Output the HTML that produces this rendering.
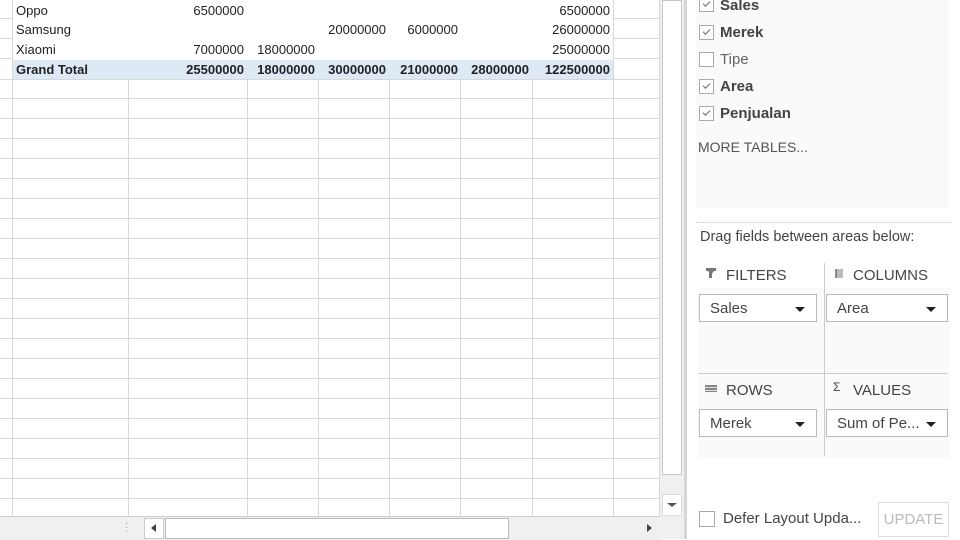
<!DOCTYPE html>
<html><head><style>
body{margin:0;width:960px;height:539px;overflow:hidden;background:#fff;position:relative;font-family:"Liberation Sans",sans-serif;}
.a{position:absolute}
.t{position:absolute;font-size:13px;color:#222;line-height:20px}
.r{text-align:right}
.b{font-weight:bold}
.p{font-size:15px;color:#444;position:absolute}
.cb{position:absolute;width:13px;height:13px;border:1px solid #aaa;background:#fff;left:699px}
.cb.k::after{content:"";position:absolute;left:3px;top:1px;width:6px;height:3px;border-left:1.5px solid #666;border-bottom:1.5px solid #666;transform:rotate(-45deg);top:3px}
.dd{position:absolute;height:28px;border:1px solid #bbb;background:#fff;font-size:15px;color:#444;line-height:28px;padding-left:10px;box-sizing:border-box}
.dd::after{content:"";position:absolute;right:11px;top:12px;border:5px solid transparent;border-top:5px solid #222;border-bottom:0}
</style></head><body>
<svg class="a" style="left:0;top:0" width="660" height="517">
<g stroke="#d8d8d8" stroke-width="1">
<line x1="12.5" y1="0" x2="12.5" y2="517"/>
<line x1="613.5" y1="0" x2="613.5" y2="517"/>
<line x1="659.5" y1="0" x2="659.5" y2="517"/>
<g id="v"><line x1="128.5" y1="80" x2="128.5" y2="517"/><line x1="247.5" y1="80" x2="247.5" y2="517"/><line x1="318.5" y1="80" x2="318.5" y2="517"/><line x1="389.5" y1="80" x2="389.5" y2="517"/><line x1="460.5" y1="80" x2="460.5" y2="517"/><line x1="532.5" y1="80" x2="532.5" y2="517"/></g>
<path d="M0 18.5H12M0 38.5H12M0 58.5H12M613 18.5H660M613 38.5H660M613 58.5H660M0 79.5H660M0 98.5H660M0 118.5H660M0 138.5H660M0 158.5H660M0 178.5H660M0 198.5H660M0 218.5H660M0 238.5H660M0 258.5H660M0 278.5H660M0 298.5H660M0 318.5H660M0 338.5H660M0 358.5H660M0 378.5H660M0 398.5H660M0 418.5H660M0 438.5H660M0 458.5H660M0 478.5H660M0 498.5H660"/>
</g>
<rect x="13" y="60" width="600" height="19" fill="#dde9f5"/>
</svg>
<div class="t" style="left:16px;top:1px">Oppo</div>
<div class="t r" style="left:128px;width:116px;top:1px">6500000</div>
<div class="t r" style="left:532px;width:78px;top:1px">6500000</div>
<div class="t" style="left:16px;top:20px">Samsung</div>
<div class="t r" style="left:318px;width:68px;top:20px">20000000</div>
<div class="t r" style="left:389px;width:69px;top:20px">6000000</div>
<div class="t r" style="left:532px;width:78px;top:20px">26000000</div>
<div class="t" style="left:16px;top:40px">Xiaomi</div>
<div class="t r" style="left:128px;width:116px;top:40px">7000000</div>
<div class="t r" style="left:247px;width:68px;top:40px">18000000</div>
<div class="t r" style="left:532px;width:78px;top:40px">25000000</div>
<div class="t b" style="left:16px;top:60px">Grand Total</div>
<div class="t r b" style="left:128px;width:116px;top:60px">25500000</div>
<div class="t r b" style="left:247px;width:68px;top:60px">18000000</div>
<div class="t r b" style="left:318px;width:68px;top:60px">30000000</div>
<div class="t r b" style="left:389px;width:69px;top:60px">21000000</div>
<div class="t r b" style="left:460px;width:69px;top:60px">28000000</div>
<div class="t r b" style="left:532px;width:78px;top:60px">122500000</div>
<!-- bottom bar -->
<div class="a" style="left:0;top:516px;width:662px;height:23px;background:#f0f0f0;border-top:1px solid #ccc"></div>
<div class="a" style="left:125px;top:522px;color:#999;font-size:10px;line-height:4px">·<br>·<br>·</div>
<div class="a" style="left:144px;top:518px;width:20px;height:21px;background:#fff;border:1px solid #ccc;box-sizing:border-box"></div>
<div class="a" style="left:151px;top:524px;border:4px solid transparent;border-right:5px solid #444;border-left:0"></div>
<div class="a" style="left:165px;top:518px;width:344px;height:21px;background:#fff;border:1px solid #bbb;box-sizing:border-box"></div>
<div class="a" style="left:647px;top:524px;border:4px solid transparent;border-left:5px solid #444;border-right:0"></div>
<!-- vscroll -->
<div class="a" style="left:660px;top:0;width:24px;height:539px;background:#f0f0f0"></div>
<div class="a" style="left:662px;top:0;width:20px;height:475px;background:#fff;border:1px solid #c8c8c8;box-sizing:border-box"></div>
<div class="a" style="left:662px;top:494px;width:20px;height:22px;background:#fff;border:1px solid #ddd;box-sizing:border-box"></div>
<div class="a" style="left:667px;top:503px;border:5px solid transparent;border-top:4px solid #555;border-bottom:0"></div>
<!-- panel -->
<div class="a" style="left:684px;top:0;width:276px;height:539px;background:#fff;border-left:3px solid #d6d6d6;box-sizing:border-box"></div>
<div class="a" style="left:696px;top:0;width:252px;height:208px;background:#fafafa"></div>
<div class="cb k" style="top:-3px"></div><div class="p b" style="left:720px;top:-3px">Sales</div>
<div class="cb k" style="top:25px"></div><div class="p b" style="left:720px;top:24px">Merek</div>
<div class="cb" style="top:52px"></div><div class="p" style="left:720px;top:51px;color:#666">Tipe</div>
<div class="cb k" style="top:79px"></div><div class="p b" style="left:720px;top:78px">Area</div>
<div class="cb k" style="top:106px"></div><div class="p b" style="left:720px;top:105px">Penjualan</div>
<div class="p" style="left:698px;top:139px;font-size:14px;color:#555">MORE TABLES...</div>
<div class="a" style="left:696px;top:222px;width:256px;border-top:1px dotted #ccc"></div>
<div class="p" style="left:700px;top:229px;font-size:14.5px;color:#444">Drag fields between areas below:</div>
<div class="a" style="left:698px;top:288px;width:252px;height:170px;background:#fafafa"></div>
<div class="a" style="left:824px;top:263px;height:193px;border-left:1px solid #ccc"></div>
<div class="a" style="left:698px;top:373px;width:250px;border-top:1px solid #ccc"></div>
<div class="a" style="left:706px;top:268px;width:10px;height:3px;background:#777"></div>
<div class="a" style="left:706px;top:268px;border:5px solid transparent;border-top:7px solid #777;border-bottom:0"></div>
<div class="a" style="left:709px;top:272px;width:3px;height:6px;background:#777"></div>
<div class="p" style="left:726px;top:267px">FILTERS</div>
<div class="a" style="left:835px;top:269px;width:6px;height:9px;background:#bbb;border-left:2px solid #888"></div>
<div class="p" style="left:853px;top:267px">COLUMNS</div>
<div class="dd" style="left:699px;top:294px;width:118px">Sales</div>
<div class="dd" style="left:826px;top:294px;width:122px">Area</div>
<div class="a" style="left:705px;top:385px;width:12px;height:7px;background:repeating-linear-gradient(#888 0 2px,#ddd 2px 3px)"></div>
<div class="p" style="left:726px;top:382px">ROWS</div>
<div class="p" style="left:833px;top:380px;font-size:12px">Σ</div>
<div class="p" style="left:853px;top:382px">VALUES</div>
<div class="dd" style="left:699px;top:409px;width:118px">Merek</div>
<div class="dd" style="left:826px;top:409px;width:122px">Sum of Pe...</div>
<div class="a" style="left:699px;top:511px;width:16px;height:16px;border:1px solid #aaa;box-sizing:border-box;background:#fff"></div>
<div class="p" style="left:723px;top:510px">Defer Layout Upda...</div>
<div class="a" style="left:878px;top:502px;width:71px;height:35px;border:1px solid #ddd;box-sizing:border-box;color:#bbb;font-size:15px;line-height:33px;text-align:center">UPDATE</div>
</body></html>
